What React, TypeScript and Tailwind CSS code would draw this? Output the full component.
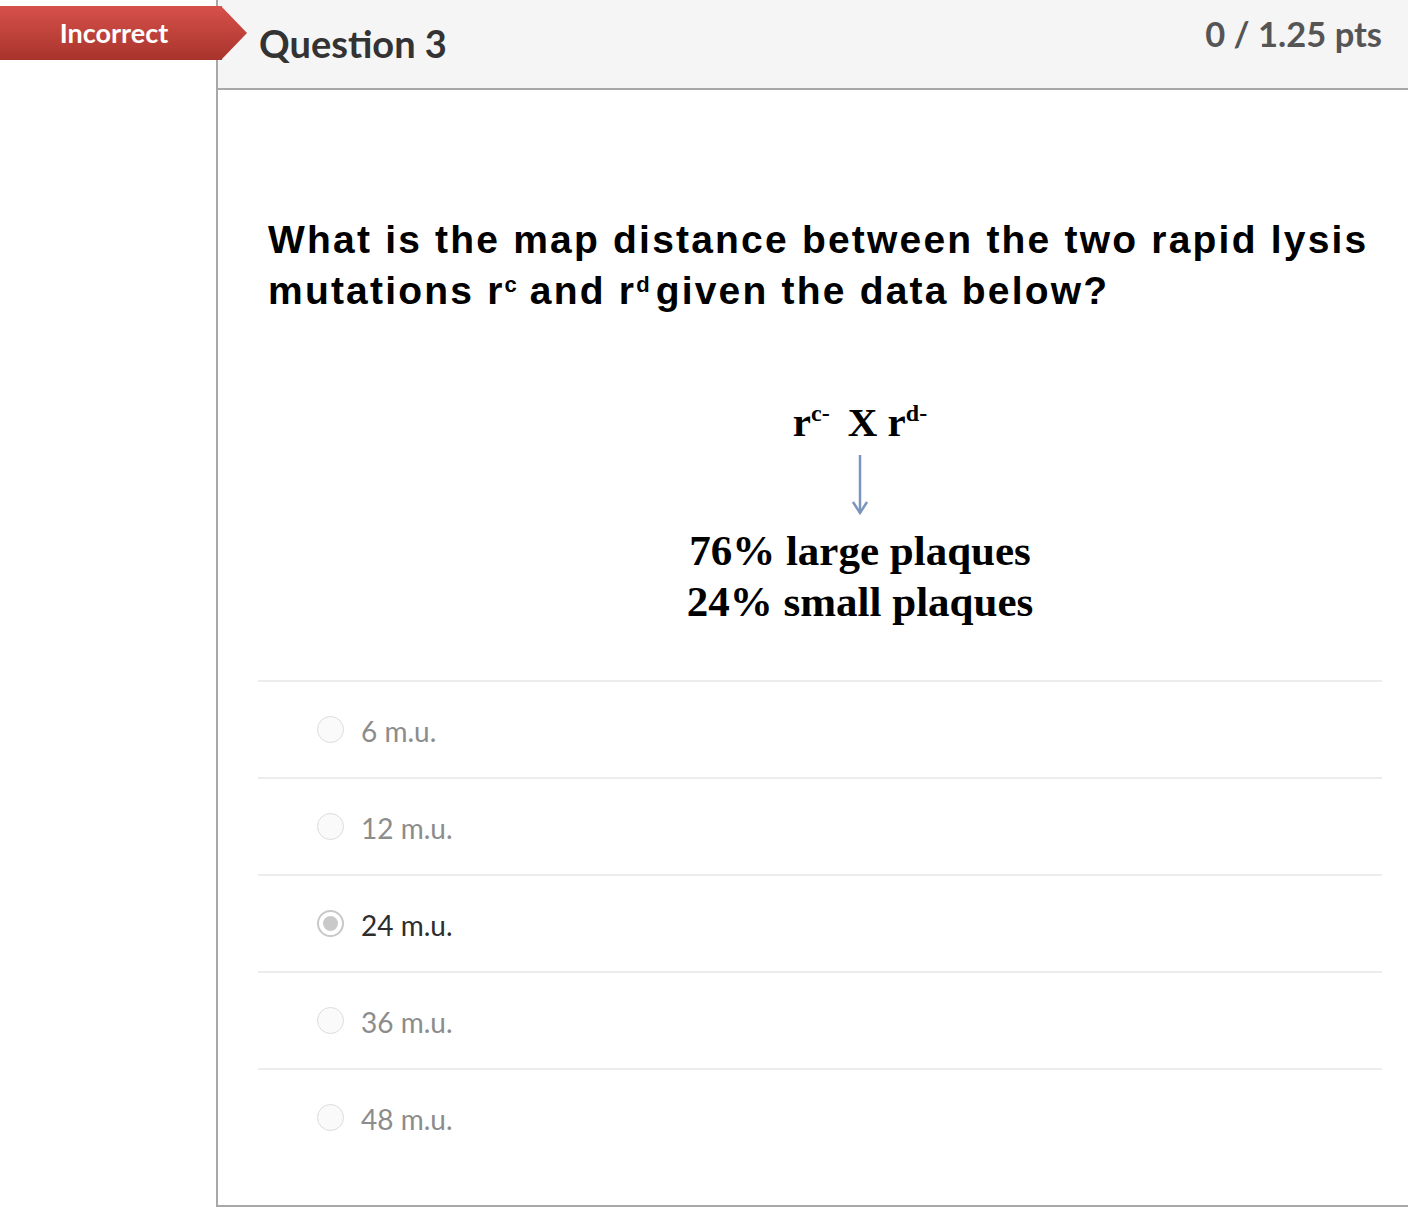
import React from "react";

const ANSWERS = [
  { label: "6 m.u.", selected: false },
  { label: "12 m.u.", selected: false },
  { label: "24 m.u.", selected: true },
  { label: "36 m.u.", selected: false },
  { label: "48 m.u.", selected: false },
];

function Radio({ selected }: { selected: boolean }) {
  if (selected) {
    return (
      <span className="flex h-[27px] w-[27px] items-center justify-center rounded-full border-2 border-[#c8c8c8] bg-white">
        <span className="h-[15px] w-[15px] rounded-full bg-[#c9c9c9]" />
      </span>
    );
  }
  return <span className="h-[27px] w-[27px] rounded-full border border-[#dcdcdc] bg-[#fafafa]" />;
}

export default function App() {
  return (
    <div className="relative h-[1210px] w-[1408px] overflow-hidden bg-white font-['Lato','Open_Sans',sans-serif]">
      {/* incorrect ribbon */}
      <div className="absolute left-0 top-[6px] z-10 flex h-[54px] items-center">
        <div className="flex h-full w-[222px] items-center justify-center bg-gradient-to-b from-[#d6514a] to-[#a8342c] pl-[6px] text-[27px] font-bold text-white">
          Incorrect
        </div>
        <svg width="26" height="54" viewBox="0 0 26 54" className="-ml-px">
          <defs>
            <linearGradient id="rib" x1="0" y1="0" x2="0" y2="1">
              <stop offset="0" stopColor="#d6514a" />
              <stop offset="1" stopColor="#a8342c" />
            </linearGradient>
          </defs>
          <polygon points="0,0 26,27 0,54" fill="url(#rib)" />
        </svg>
      </div>

      <div className="ml-[216px] h-[1207px] border-b-2 border-l-2 border-[#a8a8a8]">
        {/* header */}
        <div className="flex h-[90px] items-start justify-between border-b-2 border-[#a8a8a8] bg-[#f5f5f5] pl-[41px] pr-[26px]">
          <h2 className="mt-[20px] text-[38px] font-bold leading-[46px] text-[#333]">Question 3</h2>
          <span className="mt-[12px] text-[34.5px] font-bold leading-[44px] text-[#555]">0 / 1.25 pts</span>
        </div>

        <div className="pl-[40px] pr-[26px]">
          {/* question text */}
          <p className="mt-[124px] pl-[10px] font-['Liberation_Sans',Arial,sans-serif] text-[39px] font-bold leading-[51px] tracking-[2.2px] text-black">
            What is the map distance between the two rapid lysis
            <br />
            mutations r
            <span className="relative -top-[12px] text-[22px] leading-none tracking-normal">c</span> and r
            <span className="relative -top-[12px] mr-[6px] text-[22px] leading-none tracking-normal">d</span>given the data below?
          </p>

          {/* cross diagram */}
          <div className="mt-[84px] flex flex-col items-center pl-[80px] font-['Liberation_Serif','Times_New_Roman',serif] font-bold text-black">
            <div className="text-[41px] leading-[44px]">
              r<span className="relative -top-[15px] text-[24px] leading-none">c-</span>
              <span className="ml-[18px]">X</span> r
              <span className="relative -top-[15px] text-[24px] leading-none">d-</span>
            </div>
            <svg width="20" height="62" viewBox="0 0 20 62" className="mt-[11px]">
              <line x1="10" y1="0" x2="10" y2="58" stroke="#7b95bd" strokeWidth="2.5" />
              <polyline points="3,47 10,58 17,47" fill="none" stroke="#7b95bd" strokeWidth="2.5" />
            </svg>
            <div className="mt-[8px] text-[43px] leading-[51px]">76% large plaques</div>
            <div className="text-[43px] leading-[51px]">24% small plaques</div>
          </div>

          {/* answers */}
          <div className="mt-[53px]">
            {ANSWERS.map((a) => (
              <div key={a.label} className="flex h-[97px] items-center border-t-2 border-[#ececec] pl-[59px]">
                <Radio selected={a.selected} />
                <span
                  className={`ml-[17px] mt-[2px] text-[28px] ${a.selected ? "text-[#2d2d2d]" : "text-[#8c8c8c]"}`}
                >
                  {a.label}
                </span>
              </div>
            ))}
          </div>
        </div>
      </div>
    </div>
  );
}
